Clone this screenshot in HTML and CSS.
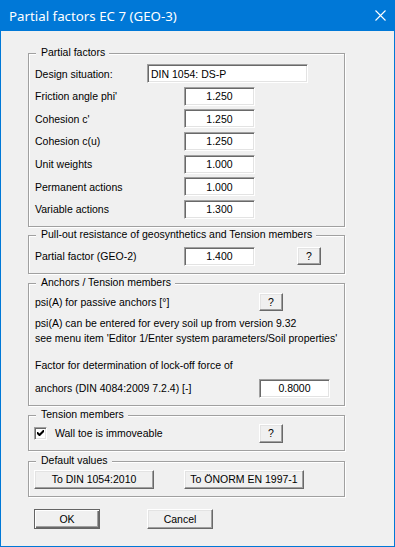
FILE: index.html
```
<!DOCTYPE html>
<html>
<head>
<meta charset="utf-8">
<link rel="stylesheet" href="styles.css">
</head>
<body>
<div class="window">
  <div class="titlebar">
    <span class="title">Partial factors EC 7 (GEO-3)</span>
    <svg class="close" width="11" height="11" viewBox="0 0 11 11"><path d="M0.5 0.5 L10.5 10.5 M10.5 0.5 L0.5 10.5" stroke="#fff" stroke-width="1.1" fill="none"/></svg>
  </div>
  <div class="client">
    <div class="group g1">
      <div class="legend">Partial factors</div>
      <div class="rows">
        <div class="row"><span class="label lw-design">Design situation:</span><span class="field design">DIN 1054: DS-P</span></div>
        <div class="row"><span class="label lw-num">Friction angle phi'</span><span class="field num">1.250</span></div>
        <div class="row"><span class="label lw-num">Cohesion c'</span><span class="field num">1.250</span></div>
        <div class="row"><span class="label lw-num">Cohesion c(u)</span><span class="field num">1.250</span></div>
        <div class="row"><span class="label lw-num">Unit weights</span><span class="field num">1.000</span></div>
        <div class="row"><span class="label lw-num">Permanent actions</span><span class="field num">1.000</span></div>
        <div class="row"><span class="label lw-num">Variable actions</span><span class="field num">1.300</span></div>
      </div>
    </div>

    <div class="group g2">
      <div class="legend">Pull-out resistance of geosynthetics and Tension members</div>
      <div class="row first">
        <span class="label lw-num">Partial factor (GEO-2)</span><span class="field num">1.400</span><span class="btn help help-far">?</span>
      </div>
    </div>

    <div class="group g3">
      <div class="legend">Anchors / Tension members</div>
      <div class="row first">
        <span class="label lw-anchor">psi(A) for passive anchors [°]</span><span class="btn help short">?</span>
      </div>
      <div class="note">
        <div class="line">psi(A) can be entered for every soil up from version 9.32</div>
        <div class="line">see menu item 'Editor 1/Enter system parameters/Soil properties'</div>
      </div>
      <div class="line factor">Factor for determination of lock-off force of</div>
      <div class="row">
        <span class="label lw-anchor">anchors (DIN 4084:2009 7.2.4) [-]</span><span class="field num">0.8000</span>
      </div>
    </div>

    <div class="group g4">
      <div class="legend">Tension members</div>
      <div class="row first">
        <span class="check-wrap lw-check">
          <span class="checkbox"><svg width="9" height="9" viewBox="0 0 9 9"><path d="M1 3 L1 5 L3 7 L4 7 L8 3 L8 1 L7 1 L3.5 4.5 L2 3 Z" fill="#000"/></svg></span>
          <span class="check-label">Wall toe is immoveable</span>
        </span>
        <span class="btn help">?</span>
      </div>
    </div>

    <div class="group g5">
      <div class="legend">Default values</div>
      <div class="row first defaults">
        <span class="btn wide">To DIN 1054:2010</span>
        <span class="btn wide">To ÖNORM EN 1997-1</span>
      </div>
    </div>

    <div class="actions">
      <span class="btn action default">OK</span>
      <span class="btn action">Cancel</span>
    </div>
  </div>
</div>
</body>
</html>
```
FILE: styles.css
```
* { box-sizing: border-box; }
html, body { margin: 0; padding: 0; }
body {
  background: #f0f0f0;
  font-family: "Liberation Sans", Arial, sans-serif;
  font-size: 10.5px;
  color: #000;
}
.window {
  width: 395px;
  height: 547px;
  border: 1px solid #0078d7;
  border-top: 0;
  background: #f0f0f0;
  display: flex;
  flex-direction: column;
}
.titlebar {
  height: 31px;
  flex: none;
  background: #0078d7;
  color: #fff;
  display: flex;
  align-items: center;
  justify-content: space-between;
  padding: 0 8px 0 8px;
  margin: 0 -1px;
}
.title {
  font-family: "Noto Sans", sans-serif;
  font-size: 13.3px;
  padding-left: 1px;
}
.close { display: block; margin-right: 1px; }

.client {
  padding: 22px 0 0 27px;
}
.group {
  width: 317px;
  border: 1px solid #a0a0a0;
  box-shadow: 1px 1px 0 #fff, inset 1px 1px 0 #fff;
  padding: 0 6px 7px 6px;
}
.legend {
  display: block;
  width: fit-content;
  height: 13px;
  line-height: 13px;
  margin: -8px 0 0 1px;
  padding: 0 4px 0 5px;
  background: #f0f0f0;
  white-space: nowrap;
}
.g2 { margin-top: 8px; }
.g3 { margin-top: 9px; }
.g4 { margin-top: 9px; }
.g5 { margin-top: 10px; }

.rows {
  margin-top: 5px;
  display: grid;
  grid-auto-rows: 19px;
  row-gap: 3.667px;
}
.row {
  display: flex;
  align-items: center;
  height: 19px;
}
.row.first { margin-top: 6px; }
.g3 .row.first { margin-top: 4px; }
.g4 .row.first, .g5 .row.first { margin-top: 3px; }

.label { white-space: nowrap; flex: none; }
.lw-design { width: 112px; }
.lw-num { width: 149px; }
.lw-anchor { width: 224px; }
.lw-check { width: 225px; margin-left: -1px; }

.field {
  display: flex;
  align-items: center;
  height: 19px;
  background: #fff;
  border: 1px solid;
  border-color: #a0a0a0 #fff #fff #a0a0a0;
  box-shadow: inset 1px 1px 0 #696969, inset -1px -1px 0 #e3e3e3;
  white-space: nowrap;
}
.field.design { width: 161px; padding-left: 3px; }
.field.num { width: 71px; justify-content: center; }

.btn {
  display: flex;
  align-items: center;
  justify-content: center;
  background: #f0f0f0;
  border: 1px solid;
  border-color: #fff #696969 #696969 #fff;
  box-shadow: inset -1px -1px 0 #a0a0a0, inset 1px 1px 0 #e3e3e3;
  white-space: nowrap;
  flex: none;
}
.help { width: 24px; height: 19px; }
.help.short { height: 18px; }
.help-far { margin-left: 42px; height: 18px; }

.note { margin-top: 4px; }
.line { height: 15px; line-height: 15px; white-space: nowrap; }
.factor { margin-top: 12px; }
.g3 .row:last-child { margin-top: 6px; }

.check-wrap { display: flex; align-items: center; }
.checkbox {
  width: 13px;
  height: 13px;
  background: #fff;
  border: 1px solid;
  border-color: #a0a0a0 #fff #fff #a0a0a0;
  box-shadow: inset 1px 1px 0 #696969, inset -1px -1px 0 #e3e3e3;
  display: flex;
  align-items: center;
  justify-content: center;
}
.checkbox svg { display: block; }
.check-label { margin-left: 8px; }

.defaults { gap: 30px; margin-left: -1px; }
.btn.wide { width: 120px; height: 19px; }

.actions {
  display: flex;
  gap: 47px;
  margin-top: 12px;
  margin-left: 6px;
}
.btn.action { width: 66px; height: 20px; }
.btn.default {
  border: 1px solid #646464;
  box-shadow: inset 1px 1px 0 #fff, inset -1px -1px 0 #696969, inset -2px -2px 0 #a0a0a0;
}
```
